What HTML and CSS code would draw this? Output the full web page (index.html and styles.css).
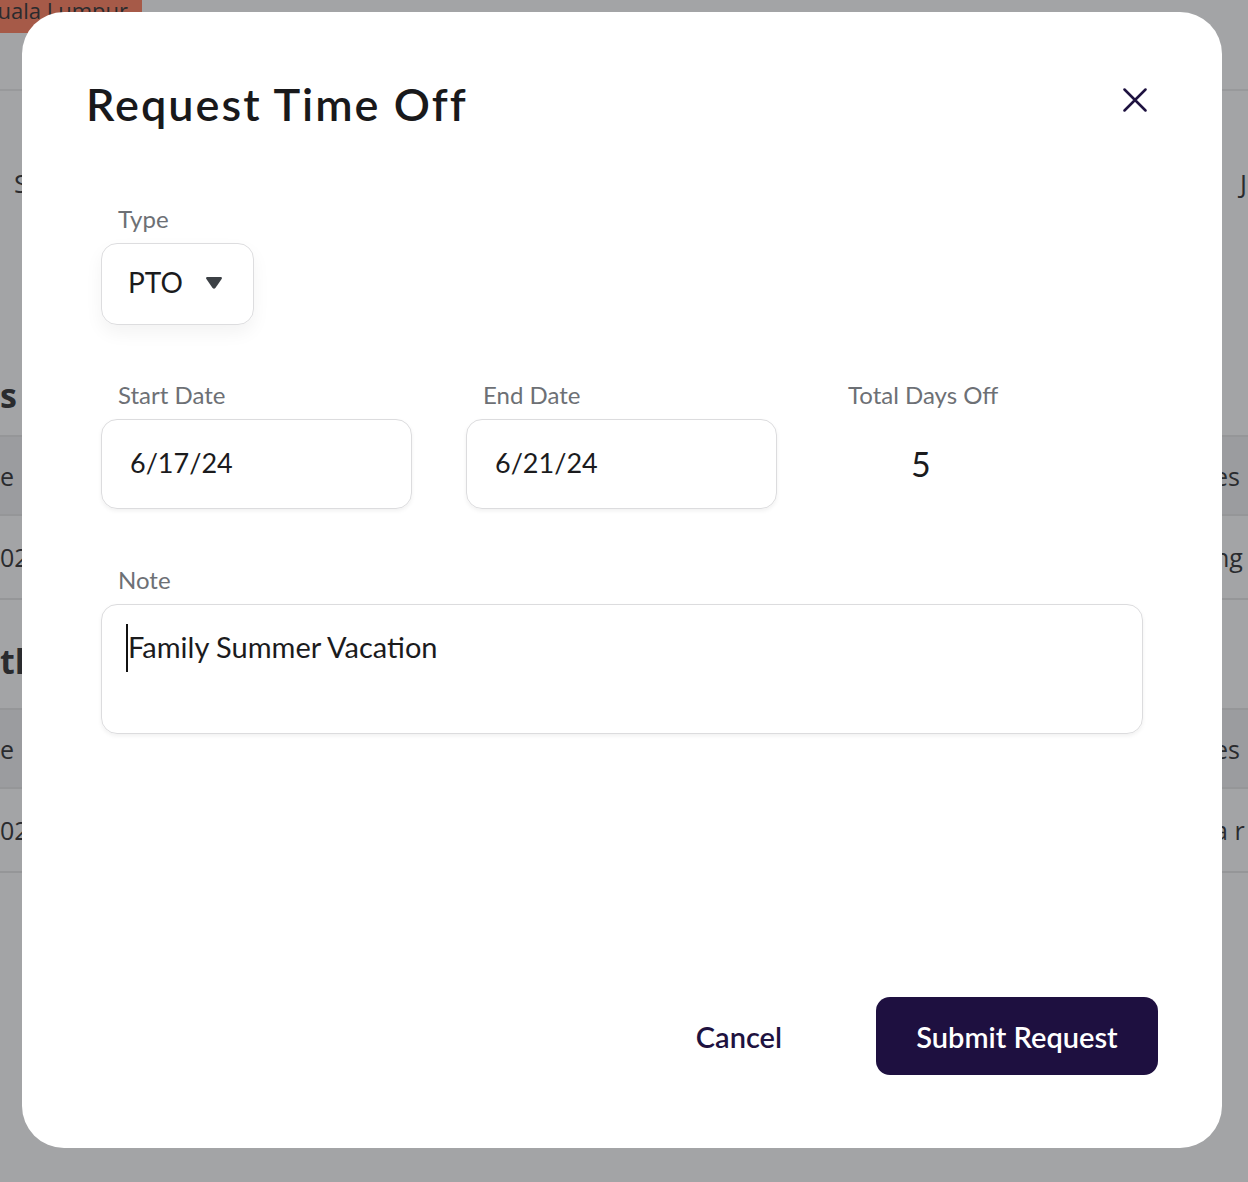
FILE: index.html
```html
<!DOCTYPE html>
<html lang="en">
<head>
    <meta charset="UTF-8">
    <meta name="viewport" content="width=device-width, initial-scale=1.0">
    <title>Request Time Off</title>
    <link rel="stylesheet" href="styles.css">
</head>
<body>
    <!-- page behind the dialog, dimmed -->
    <div class="page">
        <div class="topbar">
            <span class="city-pill">Kuala Lumpur</span>
        </div>
        <div class="info-row">
            <span>S</span>
            <span class="right-cell far">J</span>
        </div>
        <h3 class="section-title">s</h3>
        <div class="table">
            <div class="table-head"><span>e</span><span class="right-cell">es</span></div>
            <div class="table-row"><span>02</span><span class="right-cell">ng</span></div>
        </div>
        <h3 class="section-title second">th</h3>
        <div class="table">
            <div class="table-head"><span>e</span><span class="right-cell">es</span></div>
            <div class="table-row"><span>02</span><span class="right-cell">a r</span></div>
        </div>
    </div>

    <div class="modal">
        <div class="modal-header">
            <h2>Request Time Off</h2>
            <button class="close-btn" aria-label="Close">
                <svg width="24" height="24" viewBox="0 0 24 24">
                    <path d="M1.5 1.5 L22.5 22.5 M22.5 1.5 L1.5 22.5" stroke="#1e1240" stroke-width="2.5" stroke-linecap="round" fill="none"/>
                </svg>
            </button>
        </div>

        <div class="form">
            <div class="field">
                <label>Type</label>
                <div class="select">
                    <span>PTO</span>
                    <svg width="18" height="14" viewBox="0 0 18 14">
                        <path d="M2.2 1 H15.8 Q17.6 1 16.8 2.8 L10.4 12 Q9 13.6 7.6 12 L1.2 2.8 Q0.4 1 2.2 1 Z" fill="#3c4045"/>
                    </svg>
                </div>
            </div>

            <div class="date-grid">
                <div class="field">
                    <label>Start Date</label>
                    <div class="input">6/17/24</div>
                </div>
                <div class="field">
                    <label>End Date</label>
                    <div class="input">6/21/24</div>
                </div>
                <div class="field">
                    <label>Total Days Off</label>
                    <div class="total">5</div>
                </div>
            </div>

            <div class="field note">
                <label>Note</label>
                <div class="textarea"><span class="caret"></span>Family Summer Vacation</div>
            </div>
        </div>

        <div class="modal-footer">
            <button class="btn-cancel">Cancel</button>
            <button class="btn-submit">Submit Request</button>
        </div>
    </div>
</body>
</html>
```

FILE: styles.css
```css
body {
    margin: 0;
    padding: 0;
    background: #a3a4a6;
    font-family: Lato, "Open Sans", sans-serif;
    color: #1b1b1d;
    overflow: hidden;
}
.page {
    height: 1182px;
    color: #2a2b2e;
    font-family: "Open Sans", sans-serif;
}
.topbar {
    height: 89px;
    border-bottom: 2px solid #98999b;
}
.city-pill {
    display: inline-block;
    margin-left: -16px;
    padding: 0 14px 0 0;
    height: 33px;
    line-height: 20px;
    font-size: 22px;
    background: #a65a48;
    border-radius: 0 0 18px 18px;
}
.info-row {
    display: flex;
    justify-content: space-between;
    padding: 74px 0 0 14px;
    height: 88px;
    font-size: 26px;
}
.section-title {
    margin: 0;
    height: 182px;
    padding-top: 125px;
    box-sizing: border-box;
    font-size: 34px;
    line-height: 34px;
    font-weight: 700;
}
.section-title.second {
    height: 108px;
    padding-top: 44px;
}
.table-head,
.table-row {
    display: flex;
    justify-content: space-between;
    align-items: center;
    font-size: 25px;
}
.table-head {
    height: 77px;
    background: #9b9c9f;
    border-top: 2px solid #959698;
    border-bottom: 2px solid #959698;
}
.table-row {
    height: 82px;
    border-bottom: 2px solid #959698;
}
.right-cell {
    width: 34px;
    white-space: nowrap;
    text-align: left;
}
.right-cell.far {
    width: 8px;
}

.modal {
    position: fixed;
    left: 22px;
    top: 12px;
    width: 1200px;
    height: 1136px;
    background: #fff;
    border-radius: 42px;
    box-sizing: border-box;
    padding: 65px 64px 73px 64px;
    display: flex;
    flex-direction: column;
}
.modal-header {
    display: flex;
    justify-content: space-between;
    align-items: flex-start;
}
.modal-header h2 {
    margin: 0;
    font-size: 45px;
    line-height: 54px;
    font-weight: 600;
    letter-spacing: 2px;
    color: #19191b;
}
.close-btn {
    border: none;
    background: none;
    padding: 0;
    margin: 11px 11px 0 0;
    cursor: pointer;
}
.form {
    padding: 73px 0 0 15px;
}
.field label {
    display: block;
    padding-left: 17px;
    font-size: 24px;
    line-height: 30px;
    color: #6d7075;
    margin-bottom: 9px;
}
.select {
    display: inline-flex;
    align-items: center;
    gap: 22px;
    box-sizing: border-box;
    width: 153px;
    height: 82px;
    padding: 0 0 4px 26px;
    border: 1.5px solid #dddddf;
    border-radius: 16px;
    box-shadow: 0 8px 18px rgba(0, 0, 0, 0.05);
    font-size: 28px;
}
.select svg {
    margin-top: 2px;
}
.date-grid {
    display: grid;
    grid-template-columns: repeat(3, 311px);
    gap: 54px;
    margin-top: 55px;
}
.input {
    box-sizing: border-box;
    height: 90px;
    padding: 0 28px 4px;
    display: flex;
    align-items: center;
    border: 1.5px solid #dcdcde;
    border-radius: 16px;
    box-shadow: 0 2px 4px rgba(0, 0, 0, 0.06);
    font-size: 27px;
}
.total {
    padding: 24px 0 0 80px;
    font-size: 34px;
}
.field.note {
    margin-top: 56px;
}
.textarea {
    box-sizing: border-box;
    width: 1042px;
    height: 130px;
    padding: 22px 26px;
    border: 1.5px solid #dcdcde;
    border-radius: 16px;
    box-shadow: 0 2px 4px rgba(0, 0, 0, 0.06);
    font-size: 29px;
    line-height: 40px;
    position: relative;
}
.caret {
    position: absolute;
    left: 24px;
    top: 19px;
    height: 48px;
    border-left: 2px solid #111;
}
.modal-footer {
    margin-top: auto;
    display: flex;
    justify-content: flex-end;
    align-items: center;
    gap: 54px;
}
.modal-footer button {
    font-family: Lato, sans-serif;
    font-size: 29px;
    font-weight: 600;
    border: none;
    cursor: pointer;
}
.btn-cancel {
    background: none;
    color: #1e1240;
    padding: 0 40px;
}
.btn-submit {
    width: 282px;
    height: 78px;
    border-radius: 14px;
    background: #1e1040;
    color: #fff;
}
```
